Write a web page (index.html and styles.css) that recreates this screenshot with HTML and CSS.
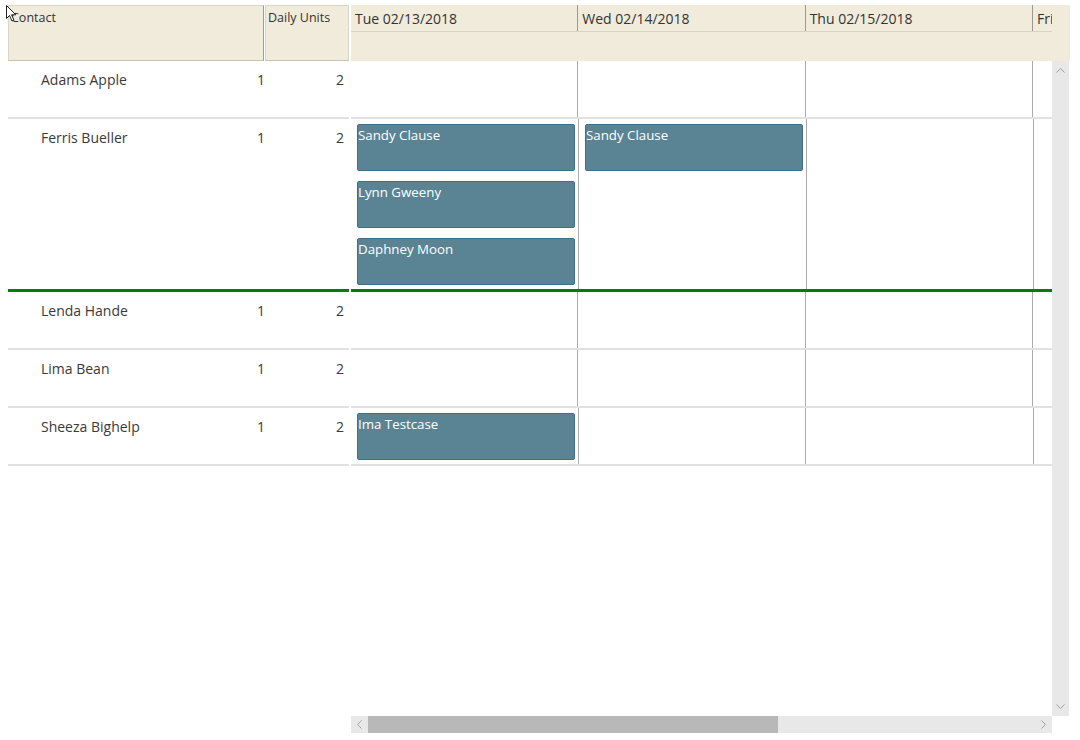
FILE: index.html
```html
<!DOCTYPE html>
<html>
<head>
<meta charset="utf-8">
<link rel="stylesheet" href="styles.css">
</head>
<body>
<div class="app">
  <div class="left">
    <div class="lhead">
      <div class="hcell contact">Contact</div>
      <div class="hcell units">Daily Units</div>
    </div>
    <div class="lrow"><span class="name">Adams Apple</span><span class="n1">1</span><span class="n2">2</span></div>
    <div class="lrow tall green"><span class="name">Ferris Bueller</span><span class="n1">1</span><span class="n2">2</span></div>
    <div class="lrow"><span class="name">Lenda Hande</span><span class="n1">1</span><span class="n2">2</span></div>
    <div class="lrow"><span class="name">Lima Bean</span><span class="n1">1</span><span class="n2">2</span></div>
    <div class="lrow"><span class="name">Sheeza Bighelp</span><span class="n1">1</span><span class="n2">2</span></div>
  </div>
  <div class="right">
    <div class="rhead">
      <div class="days">
        <div class="day">Tue 02/13/2018</div>
        <div class="day">Wed 02/14/2018</div>
        <div class="day">Thu 02/15/2018</div>
        <div class="day">Fri</div>
      </div>
    </div>
    <div class="rbody">
      <div class="viewport">
        <div class="grid">
          <div class="rrow">
            <div class="cell"></div><div class="cell"></div><div class="cell"></div><div class="cell"></div>
          </div>
          <div class="rrow tall green">
            <div class="cell">
              <div class="event">Sandy Clause</div>
              <div class="event">Lynn Gweeny</div>
              <div class="event">Daphney Moon</div>
            </div>
            <div class="cell">
              <div class="event">Sandy Clause</div>
            </div>
            <div class="cell"></div><div class="cell"></div>
          </div>
          <div class="rrow">
            <div class="cell"></div><div class="cell"></div><div class="cell"></div><div class="cell"></div>
          </div>
          <div class="rrow">
            <div class="cell"></div><div class="cell"></div><div class="cell"></div><div class="cell"></div>
          </div>
          <div class="rrow">
            <div class="cell"><div class="event">Ima Testcase</div></div>
            <div class="cell"></div><div class="cell"></div><div class="cell"></div>
          </div>
        </div>
      </div>
      <div class="vscroll">
        <svg class="arrow" width="17" height="17" viewBox="0 0 17 17"><path d="M4.5 10.5 L8.5 6.5 L12.5 10.5" fill="none" stroke="#a0a0a0" stroke-width="1"/></svg>
        <svg class="arrow" width="17" height="17" viewBox="0 0 17 17"><path d="M4.5 6.5 L8.5 10.5 L12.5 6.5" fill="none" stroke="#a0a0a0" stroke-width="1"/></svg>
      </div>
    </div>
    <div class="hbar">
      <div class="hscroll">
        <svg class="arrow" width="17" height="17" viewBox="0 0 17 17"><path d="M10.5 4.5 L6.5 8.5 L10.5 12.5" fill="none" stroke="#a0a0a0" stroke-width="1"/></svg>
        <div class="track"><div class="thumb"></div></div>
        <svg class="arrow" width="17" height="17" viewBox="0 0 17 17"><path d="M6.5 4.5 L10.5 8.5 L6.5 12.5" fill="none" stroke="#a0a0a0" stroke-width="1"/></svg>
      </div>
      <div class="corner"></div>
    </div>
  </div>
  <svg class="cursor" width="12" height="18" viewBox="0 0 12 18"><path d="M0.5 0.5 L0.5 13.5 L3.5 10.5 L6 16 L8 15 L5.5 9.8 L9.8 9.8 Z" fill="#fff" stroke="#222" stroke-width="1"/></svg>
</div>
</body>
</html>
```
FILE: styles.css
```css
* { box-sizing: border-box; }
html, body { margin: 0; padding: 0; background: #fff; }
body { font-family: "Open Sans", "Noto Sans", sans-serif; color: #3a3a3a; }

.app {
  position: relative;
  width: 1080px;
  height: 740px;
  display: flex;
  padding: 5px 0 0 8px;
  gap: 2px;
}

/* left panel */
.left { width: 341px; display: flex; flex-direction: column; }
.lhead { display: flex; height: 56px; gap: 1px; }
.hcell {
  background: #f1ebdb;
  border: 1px solid #dcd6c6;
  font-size: 12.5px;
  color: #333;
  padding: 4px 2px;
  line-height: 16px;
}
.contact { width: 256px; border-right: 1px solid #9f9c95; border-bottom-color: #c9c3b3; }
.units { width: 84px; border-bottom-color: #c9c3b3; }

.lrow {
  height: 58px;
  display: grid;
  grid-template-columns: 1fr 31px 84px;
  border-bottom: 2px solid #e1e1e1;
  font-size: 14px;
  line-height: 19px;
  padding-top: 9px;
}
.lrow.tall { height: 173px; }
.lrow.green, .rrow.green { border-bottom: 3px solid #008000; }
.name { padding-left: 33px; }
.n1 { text-align: right; }
.n2 { text-align: right; padding-right: 5px; }

/* right panel */
.right { width: 719px; display: flex; flex-direction: column; }
.rhead { height: 56px; background: #f1ebdb; overflow: hidden; }
.days {
  display: flex;
  width: 701px;
  height: 27px;
  border-bottom: 1px solid #d9d3c4;
  overflow: hidden;
}
.day {
  flex: 0 0 227.33px;
  border-right: 1px solid #9b9890;
  font-size: 14px;
  line-height: 27px;
  padding-left: 4px;
  color: #333;
  white-space: nowrap;
}
.rbody { display: flex; height: 655px; }
.viewport { width: 701px; overflow: hidden; }
.grid { width: 909.33px; }
.rrow {
  display: flex;
  height: 58px;
  border-bottom: 2px solid #e1e1e1;
}
.rrow.tall { height: 173px; }
.cell {
  flex: 0 0 227.33px;
  border-right: 1px solid #ababab;
  padding: 5px 3px 0 6px;
  display: flex;
  flex-direction: column;
  gap: 10px;
}
.event {
  height: 47px;
  width: 218px;
  background: #5a8494;
  border: 1px solid #3d7189;
  border-radius: 2px;
  color: #fff;
  font-size: 13.3px;
  line-height: 18px;
  padding: 1px 0 0 0;
  white-space: nowrap;
}
.vscroll {
  width: 17px;
  background: #e8e8e8;
  display: flex;
  flex-direction: column;
  justify-content: space-between;
  padding: 1px 0;
}
.arrow { display: block; flex: none; }
.hbar { display: flex; height: 17px; }
.hscroll {
  width: 701px;
  background: #e8e8e8;
  display: flex;
}
.track { flex: 1; display: flex; }
.thumb { width: 410px; background: #b8b8b8; height: 100%; }
.corner { width: 17px; background: #fff; }

.cursor { position: absolute; left: 6px; top: 5px; }
```
